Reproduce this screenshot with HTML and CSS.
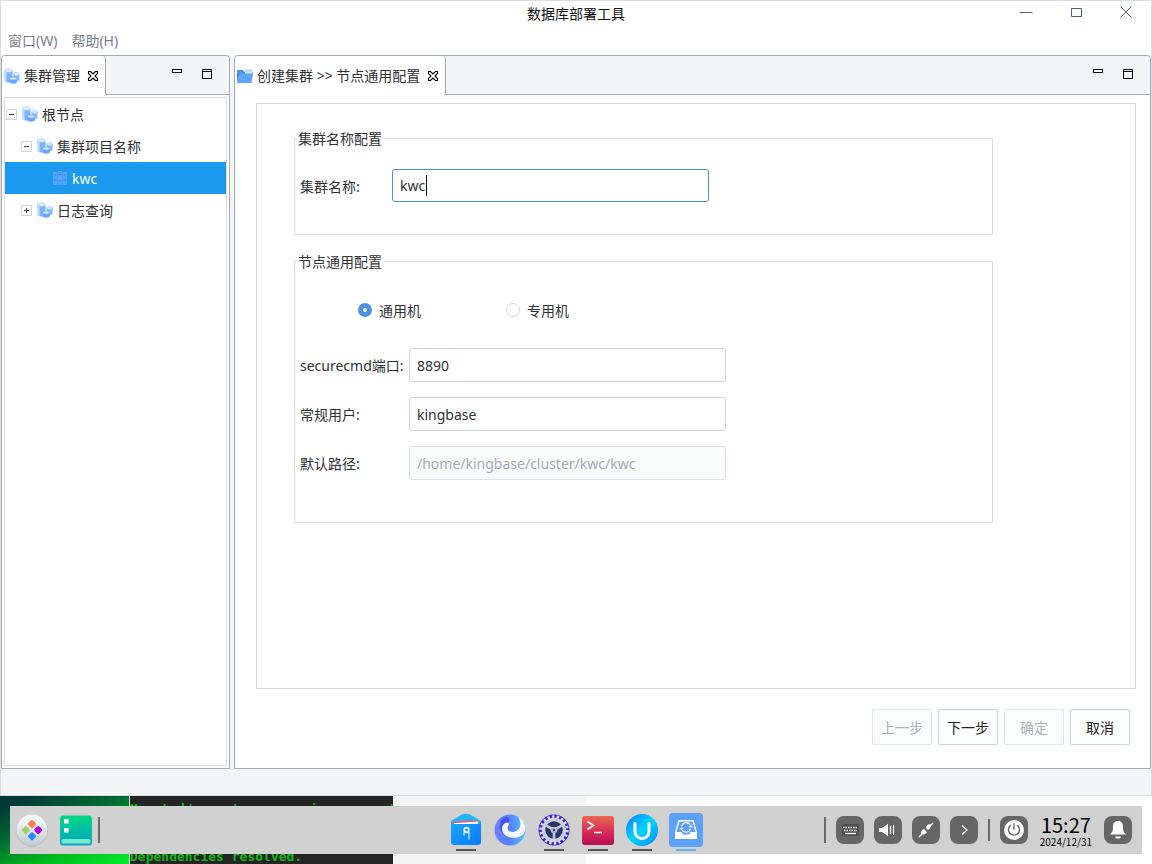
FILE: index.html
```html
<!DOCTYPE html>
<html lang="zh-CN">
<head>
  <meta charset="UTF-8">
  <meta name="viewport" content="width=device-width, initial-scale=1.0">
  <title>数据库部署工具</title>
  <link rel="stylesheet" href="styles.css">
</head>
<body>
  <!-- Shared icons -->
  <svg class="sprite" aria-hidden="true">
    <symbol id="icon-db" viewBox="0 0 16 16">
      <path d="M.5 2.500v10c0 1.200 1.500 2 4 2s4-.8 4-2v-10z" fill="#7db3fb"/>
      <path d="M.5 2.500v10c0 .8.700 1.400 2 1.700V3.500z" fill="#c4deff"/>
      <ellipse cx="4.500" cy="2.500" rx="4" ry="1.800" fill="#e2efff" stroke="#9cc6ff" stroke-width=".6"/>
      <path d="M9.500 6v5.500c0 1 1.200 1.500 3 1.500s3-.5 3-1.500V6z" fill="#8dbdfd"/>
      <ellipse cx="12.500" cy="6" rx="3" ry="1.400" fill="#e2efff" stroke="#86b8fb" stroke-width=".6"/>
      <path d="M5.500 10.500V14c0 1 1.500 1.700 3.700 1.700s3.800-.7 3.800-1.700v-3.500z" fill="#68a7fd"/>
      <ellipse cx="9.200" cy="10.500" rx="3.700" ry="1.700" fill="#d4e7ff" stroke="#5b9df8" stroke-width=".7"/>
    </symbol>
    <symbol id="icon-close" viewBox="0 0 12 12">
      <path d="M1.500 1.500h2L6 4l2.500-2.500h2v2L8 6l2.500 2.500v2h-2L6 8l-2.500 2.500h-2v-2L4 6 1.500 3.500z" fill="#fff" stroke="#000" stroke-width="1.100"/>
    </symbol>
    <symbol id="icon-min" viewBox="0 0 10 12">
      <rect x=".5" y=".5" width="9" height="3" fill="#fff" stroke="#000"/>
    </symbol>
    <symbol id="icon-max" viewBox="0 0 10 12">
      <path d="M.5.5h9v9h-9zM0 2.500h10" fill="none" stroke="#000"/>
    </symbol>
  </svg>

  <div class="window">
    <header class="titlebar">
      <h1>数据库部署工具</h1>
      <div class="window-buttons">
        <button type="button" aria-label="最小化"><svg viewBox="0 0 14 14"><path d="M.5 7.500h13" /></svg></button>
        <button type="button" aria-label="最大化"><svg viewBox="0 0 14 14"><path d="M2.500 3.500h10v8h-10z" /></svg></button>
        <button type="button" aria-label="关闭"><svg viewBox="0 0 14 14"><path d="M1.500 1.500l11 11M12.500 1.500l-11 11" /></svg></button>
      </div>
    </header>

    <nav class="menubar">
      <a href="#window">窗口(W)</a>
      <a href="#help">帮助(H)</a>
    </nav>

    <main class="workspace">
      <section class="panel side-panel">
        <div class="panel-head">
          <div class="tab">
            <svg class="icon"><use href="#icon-db"/></svg>
            <h2>集群管理</h2>
            <button type="button" aria-label="关闭"><svg class="close-icon"><use href="#icon-close"/></svg></button>
          </div>
          <div class="panel-tools">
            <button type="button" aria-label="最小化"><svg><use href="#icon-min"/></svg></button>
            <button type="button" aria-label="最大化"><svg><use href="#icon-max"/></svg></button>
          </div>
        </div>
        <ul class="tree">
          <li class="node"><button type="button" class="toggle" aria-label="折叠"><svg viewBox="0 0 11 11"><path d="M3 5.500h5"/></svg></button><svg class="icon"><use href="#icon-db"/></svg><span>根节点</span></li>
          <li class="node level-1"><button type="button" class="toggle" aria-label="折叠"><svg viewBox="0 0 11 11"><path d="M3 5.500h5"/></svg></button><svg class="icon"><use href="#icon-db"/></svg><span>集群项目名称</span></li>
          <li class="node level-2 selected"><svg class="icon" viewBox="0 0 16 16">
            <path d="M1 2h4v13H1zM11 2h4v13h-4zM5.500 1h5v14h-5z" fill="#5aa2ff"/>
            <path d="M1.500 5h3M11.500 5h3M6 4.500h4M8 2v2.500M1.500 10h3M11.500 10h3M7 11h2" stroke="#3486e8" stroke-width=".9"/></svg><span>kwc</span></li>
          <li class="node level-1"><button type="button" class="toggle" aria-label="展开"><svg viewBox="0 0 11 11"><path d="M3 5.500h5M5.500 3v5"/></svg></button><svg class="icon"><use href="#icon-db"/></svg><span>日志查询</span></li>
        </ul>
      </section>

      <section class="panel main-panel">
        <div class="panel-head">
          <div class="tab">
            <svg class="icon" viewBox="0 0 16 16">
              <path d="M0 2h6l1.500 2H16v4H0z" fill="#4a92f5"/>
              <path d="M8 1h7.500v5H8z" fill="#dcecff"/>
              <path d="M8 3h7.500" stroke="#9cc7ff"/>
              <path d="M2.500 5.500H16L14.500 15H0z" fill="#5fa6ff"/>
              <path d="M0 6v9L2.500 5.500z" fill="#3f86ea"/>
            </svg>
            <h2>创建集群 &gt;&gt; 节点通用配置</h2>
            <button type="button" aria-label="关闭"><svg class="close-icon"><use href="#icon-close"/></svg></button>
          </div>
          <div class="panel-tools">
            <button type="button" aria-label="最小化"><svg><use href="#icon-min"/></svg></button>
            <button type="button" aria-label="最大化"><svg><use href="#icon-max"/></svg></button>
          </div>
        </div>

        <form class="wizard">
          <div class="wizard-page">
            <fieldset class="group-name">
              <legend>集群名称配置</legend>
              <div class="field">
                <label for="clusterName">集群名称:</label>
                <div class="active-input">
                  <input type="text" id="clusterName" value="kwc">
                  <span class="caret"></span>
                </div>
              </div>
            </fieldset>

            <fieldset class="group-node">
              <legend>节点通用配置</legend>
              <div class="radios">
                <label><input type="radio" name="machine" checked><span>通用机</span></label>
                <label><input type="radio" name="machine"><span>专用机</span></label>
              </div>
              <div class="field">
                <label for="port">securecmd端口:</label>
                <input type="text" id="port" value="8890">
              </div>
              <div class="field">
                <label for="user">常规用户:</label>
                <input type="text" id="user" value="kingbase">
              </div>
              <div class="field">
                <label for="path">默认路径:</label>
                <input type="text" id="path" value="/home/kingbase/cluster/kwc/kwc" disabled>
              </div>
            </fieldset>
          </div>
          <div class="actions">
            <button type="button" disabled>上一步</button>
            <button type="button">下一步</button>
            <button type="button" disabled>确定</button>
            <button type="button">取消</button>
          </div>
        </form>
      </section>
    </main>
    <footer class="statusbar"></footer>
  </div>

  <!-- Desktop under the window -->
  <div class="desktop">
    <div class="wallpaper"></div>
    <div class="terminal">
      <span>Mounted/some tmp space in case set</span>
      <span>Dependencies resolved.</span>
    </div>
    <div class="paper"></div>

    <div class="taskbar">
      <div class="launchers">
        <button type="button" aria-label="开始"><svg viewBox="0 0 34 34">
          <defs><linearGradient id="g-start" x2="0" y2="1"><stop stop-color="#fff"/><stop offset="1" stop-color="#bfcccc"/></linearGradient></defs>
          <circle cx="17" cy="17.500" r="16" fill="#bbb"/>
          <circle cx="17" cy="17" r="15.500" fill="url(#g-start)"/>
          <g stroke-width="3" stroke-linejoin="round">
            <path d="M17 8.500l2.500 2.500-2.500 2.500-2.500-2.500z" fill="#ff7a50" stroke="#ff7a50"/>
            <path d="M10.800 14.500l2.500 2.500-2.500 2.500L8.300 17z" fill="#9ad06a" stroke="#9ad06a"/>
            <path d="M23.200 14.500l2.500 2.500-2.500 2.500-2.500-2.500z" fill="#b400dc" stroke="#b400dc"/>
            <path d="M17 20.800l2.500 2.500-2.500 2.500-2.500-2.500z" fill="#2589ff" stroke="#2589ff"/>
          </g></svg></button>
        <button type="button" aria-label="显示桌面"><svg viewBox="0 0 34 34">
          <defs><linearGradient id="g-desk" x2="0" y2="1"><stop stop-color="#00d681"/><stop offset="1" stop-color="#00a6c8"/></linearGradient></defs>
          <rect x="1" y="2.500" width="32" height="30" rx="3" fill="url(#g-desk)"/>
          <path d="M5 6h4.500v4.500H5zM5 15h4.500v4.500H5z" fill="#fff"/>
          <rect x="2.500" y="26" width="29" height="4.500" rx="1.500" fill="#7be8cb"/></svg></button>
        <span class="separator"></span>
      </div>

      <div class="apps">
        <button type="button" class="running" aria-label="文件管理"><svg viewBox="0 0 34 34">
          <defs><linearGradient id="g-file" x2="1" y2="1"><stop stop-color="#18a8ff"/><stop offset="1" stop-color="#0878ff"/></linearGradient></defs>
          <path d="M2 8L13 1.500q4-1.500 8 0L32 8v20H2z" fill="#21b5f5"/>
          <path d="M4 8.500L28 7v5H4z" fill="#f05a78"/><path d="M5 10.300L29 8.500V14H5z" fill="#fff"/>
          <path d="M2 9.500q1 1.500 3 1.500h24q2 0 3-1.500V29a3 3 0 0 1-3 3H5a3 3 0 0 1-3-3z" fill="url(#g-file)"/>
          <circle cx="17.500" cy="17" r="2.300" fill="none" stroke="#fff" stroke-width="1.700"/>
          <path d="M15 18.500v4M20 19v7.500" stroke="#dff1ff" stroke-width="1.200"/></svg></button>
        <button type="button" aria-label="浏览器"><svg viewBox="0 0 34 34">
          <defs><linearGradient id="g-web" x2="1"><stop stop-color="#6e82ff"/><stop offset=".45" stop-color="#557cff"/><stop offset="1" stop-color="#55c5ff"/></linearGradient></defs>
          <circle cx="17" cy="17" r="15.500" fill="url(#g-web)"/>
          <path d="M8 8c2-4 7-5 8-2 .8 2-2 4.500-2.500 7.500-.5 3 1 5.500 3 6-5 2-9 0-9.500-4.500C6.800 12 7 10 8 8z" fill="#4a50f4"/>
          <path d="M25 3.500c5 3 7.500 8 7.300 13C31 26 17 27 11.500 21.500 8 18 8.500 13 11 11c2-2 5-1.500 5 .3 0 1.200-1.500 1.700-1.500 3.700 0 3 3.500 5 7.500 3.500 6-2 7-8.500 3-15z" fill="#f4f7ff"/></svg></button>
        <button type="button" class="running" aria-label="设置"><svg viewBox="0 0 34 34">
          <circle cx="17" cy="17" r="15.500" fill="#4020cf"/>
          <circle cx="17" cy="17" r="13.200" fill="none" stroke="#dfe1f2" stroke-width="3" stroke-dasharray="2.300 2.308"/>
          <circle cx="17" cy="17" r="10.500" fill="#2d3468" stroke="#cdd1e6" stroke-width="3.500"/>
          <path d="M17 17v9M17 17l-8-4.600M17 17l8-4.600" stroke="#c4c8dd" stroke-width="2.600"/>
          <circle cx="17" cy="17" r="3.300" fill="#b9bed7"/><circle cx="17" cy="17" r="1.300" fill="#3e4480"/></svg></button>
        <button type="button" class="running" aria-label="终端"><svg viewBox="0 0 34 34">
          <defs><linearGradient id="g-term" x2="0" y2="1"><stop stop-color="#ea6850"/><stop offset=".5" stop-color="#da3158"/><stop offset="1" stop-color="#b80b57"/></linearGradient></defs>
          <rect x="1" y="3" width="32" height="29" rx="3" fill="url(#g-term)"/>
          <path d="M6.500 8.500l6 4-6 4M13 19.500h8" fill="none" stroke="#fff" stroke-width="1.600"/></svg></button>
        <button type="button" class="running" aria-label="助手"><svg viewBox="0 0 34 34">
          <defs><linearGradient id="g-u" x2="1" y2="1"><stop stop-color="#0878f5"/><stop offset=".5" stop-color="#00d4ff"/><stop offset="1" stop-color="#0086f5"/></linearGradient></defs>
          <circle cx="17" cy="17" r="16" fill="url(#g-u)"/>
          <path d="M10 10.500v8a7 7 0 0 0 14 0v-8" fill="none" stroke="#fff" stroke-width="3" stroke-linecap="round"/></svg></button>
        <button type="button" class="running current" aria-label="数据库部署工具"><svg viewBox="0 0 34 34">
          <rect width="34" height="34" rx="4" fill="#5ba1fb"/>
          <path d="M6.700 19L10 7.700h14L27.300 19v6.300H6.700z" fill="none" stroke="#fff" stroke-width="1.400" stroke-linejoin="round"/>
          <path d="M6 19h6.500c.5 2 1.500 2.500 2.500 2.500h4c1 0 2-.5 2.500-2.500H28v7H6z" fill="#fff"/>
          <path d="M12.700 13.500a4.500 4.500 0 0 1 8.300-1.700M21.500 15.500a4.500 4.500 0 0 1-8.300 1.500" fill="none" stroke="#fff" stroke-width="1.100"/>
          <path d="M20 14.200h4l-2-2.500zM10.500 15h4l-2 2.500z" fill="#fff"/></svg></button>
      </div>

      <div class="tray">
        <span class="separator"></span>
        <button type="button" aria-label="键盘"><svg viewBox="0 0 28 28">
          <rect x="6" y="8" width="17" height="12" rx="1" fill="#505050"/>
          <path d="M7 11.500h15M8 14.500h13" stroke="#fff" stroke-width="1.500" stroke-dasharray="1.500 1"/><path d="M9 17.500h11" stroke="#fff" stroke-width="1.300"/></svg></button>
        <button type="button" aria-label="音量"><svg viewBox="0 0 28 28">
          <path d="M5 12h3l6-4v12l-6-4H5z" fill="#fff"/><path d="M16.500 10v8M19.500 9v10" stroke="#fff" stroke-width="1.200"/></svg></button>
        <button type="button" aria-label="网络"><svg viewBox="0 0 28 28">
          <path d="M7 21l5-5M16 12l5-5" stroke="#fff" stroke-width="1.500"/>
          <path d="M9 18c0-3 1-4 3-5l3 3c-1 2-3 3-6 2zM14 12c0-2 2-4 5-4 0 3-1 5-3 6z" fill="#fff"/></svg></button>
        <button type="button" aria-label="更多"><svg viewBox="0 0 28 28">
          <path d="M12 9.500l5 4.500-5 4.500" fill="none" stroke="#fff" stroke-width="1.300"/></svg></button>
        <span class="separator short"></span>
        <button type="button" aria-label="电源"><svg viewBox="0 0 28 28">
          <circle cx="14" cy="14" r="10" fill="#fff"/>
          <path d="M11 9a5.500 5.500 0 1 0 6 0M14 7.500v6" fill="none" stroke="#666" stroke-width="1.400"/></svg></button>
        <div class="clock">
          <time class="time">15:27</time>
          <time class="date">2024/12/31</time>
        </div>
        <button type="button" aria-label="通知"><svg viewBox="0 0 28 28">
          <path d="M14 5c-3.500 0-5 2.500-5 6 0 4-.5 5-3 7.500h16c-2.500-2.500-3-3.500-3-7.500 0-3.500-1.500-6-5-6z" fill="#fff"/>
          <path d="M11 20.500h6c-.5 1.500-1.500 2.200-3 2.200s-2.500-.7-3-2.200z" fill="#fff"/></svg></button>
      </div>
    </div>
  </div>
</body>
</html>
```

FILE: styles.css
```css
* { margin: 0; padding: 0; box-sizing: border-box; }
body {
  height: 100vh;
  display: flex;
  flex-direction: column;
  font-family: 'Noto Sans', 'Noto Sans CJK SC', sans-serif;
  font-size: 14px;
  line-height: 20px;
  color: #303133;
  background: #fff;
}
button, input { font: inherit; color: inherit; }
button { background: none; border: none; }
svg { display: block; }
a { color: inherit; text-decoration: none; }
.sprite { position: absolute; width: 0; height: 0; }
.icon { width: 16px; height: 16px; flex: none; }

/* Window */
.window {
  flex: 1;
  display: flex;
  flex-direction: column;
  border: 1px solid #dcdddf;
}
.titlebar {
  display: grid;
  grid-template-columns: 1fr auto 1fr;
  height: 26px;
  padding-top: 3px;
}
.titlebar h1 {
  grid-column: 2;
  font-size: 14px;
  font-weight: 400;
  color: #111;
}
.window-buttons {
  display: flex;
  justify-content: flex-end;
  gap: 36px;
  padding-right: 18px;
}
.window-buttons button { width: 14px; height: 16px; }
.window-buttons svg {
  width: 14px;
  height: 14px;
  fill: none;
  stroke: #50607c;
}
.menubar {
  display: flex;
  gap: 14px;
  height: 28px;
  padding: 4px 7px;
  color: #7a7f8e;
}
.workspace {
  flex: 1;
  display: flex;
  gap: 4px;
  background: #f4f5f7;
}
.statusbar { height: 26px; background: #f4f5f7; }

/* Panels */
.panel {
  display: flex;
  flex-direction: column;
  background: #fff;
  border: 1px solid #a5abb5;
  border-radius: 4px 4px 0 0;
}
.side-panel { width: 229px; }
.main-panel { flex: 1; }
.panel-head {
  display: flex;
  justify-content: space-between;
  height: 39px;
  background: #f4f5f7;
  border-bottom: 1px solid #a5abb5;
  border-radius: 4px 4px 0 0;
}
.tab {
  display: flex;
  align-items: center;
  gap: 4px;
  height: 39px;
  padding: 0 6px 0 2px;
  background: #fff;
  border-right: 1px solid #a5abb5;
  border-radius: 4px 4px 0 0;
}
.tab h2 { font-size: 14px; font-weight: 400; }
.tab button { margin-left: 3px; }
.close-icon { width: 12px; height: 12px; }
.panel-tools {
  display: flex;
  align-items: flex-start;
  gap: 20px;
  padding: 13px 17px 0 0;
}
.panel-tools svg { width: 10px; height: 12px; }

/* Tree */
.tree {
  flex: 1;
  margin: 2px;
  border: 1px solid #dcdddf;
  list-style: none;
}
.node {
  display: flex;
  align-items: center;
  gap: 4px;
  height: 32px;
  padding-left: 1px;
}
.level-1 { padding-left: 16px; }
.level-2 { padding-left: 47px; }
.selected { background: #1b99ee; color: #fff; }
.toggle {
  width: 11px;
  height: 11px;
  margin-right: 1px;
  border: 1px solid #d0d2dc;
  border-radius: 1px;
}
.toggle svg {
  width: 11px;
  height: 11px;
  margin: -1px;
  stroke: #444;
}

/* Wizard */
.wizard {
  flex: 1;
  display: flex;
  flex-direction: column;
  padding: 8px 14px 23px 21px;
}
.wizard-page {
  flex: 1;
  padding: 23px 142px 0 37px;
  border: 1px solid #dcdddf;
}
fieldset { border: 1px solid #dcdddf; }
legend { margin-left: -4px; padding: 0 2px; }
.node span, .radios span, .field label, legend { padding-top: 2px; }
.group-name { padding: 20px 5px 32px; margin-bottom: 15px; }
.group-node { padding: 27px 5px 42px; }
.field {
  display: grid;
  grid-template-columns: 109px 317px;
  align-items: center;
}
.field + .field { margin-top: 15px; }
.group-name .field { grid-template-columns: 92px 317px; }
input[type="text"] {
  width: 100%;
  height: 34px;
  padding: 0 7px;
  background: #fff;
  border: 1px solid #cfd5e3;
  border-radius: 3px;
  outline: none;
}
input[type="text"]:disabled {
  color: #a9abb0;
  background: #fafcfb;
  border-color: #dfe2ea;
}
.active-input { position: relative; }
.active-input input[type="text"] { height: 33px; border-color: #4a90d9; }
.caret {
  position: absolute;
  left: 34px;
  top: 6px;
  width: 1px;
  height: 21px;
  background: #111;
}
.radios {
  display: flex;
  height: 22px;
  margin-bottom: 27px;
  padding-left: 58px;
}
.radios label {
  display: flex;
  align-items: center;
  gap: 7px;
  width: 148px;
}
.radios input {
  appearance: none;
  width: 14px;
  height: 14px;
  background: #fff;
  border: 1px solid #d0d5e6;
  border-radius: 50%;
}
.radios input:checked { border: 5px solid #4f92e3; }
.actions {
  display: flex;
  justify-content: flex-end;
  gap: 6px;
  margin-top: 20px;
  padding-right: 6px;
}
.actions button {
  width: 60px;
  height: 36px;
  padding-top: 2px;
  background: #fdfefe;
  border: 1px solid #cbd3e1;
  border-radius: 2px;
  color: #222;
}
.actions button:disabled {
  color: #b0b2b6;
  background: #fbfdfc;
  border-color: #e2e5ee;
}

/* Desktop and taskbar */
.desktop {
  position: relative;
  display: flex;
  height: 68px;
  overflow: hidden;
}
.wallpaper {
  width: 130px;
  background: linear-gradient(160deg, #003a35 10%, #006a35 40%, #00b81c 70%, #00f030);
  border-right: 1px solid #dcdddf;
}
.terminal {
  display: flex;
  flex-direction: column;
  justify-content: space-between;
  width: 263px;
  padding-top: 6px;
  overflow: hidden;
  background: #242424;
  color: #12b812;
  font-family: 'DejaVu Sans Mono', monospace;
  font-size: 13px;
  font-weight: bold;
  line-height: 14px;
  white-space: nowrap;
}
.paper { width: 193px; background: #f4f4f4; }
.taskbar {
  position: absolute;
  top: 10px;
  left: 10px;
  right: 10px;
  height: 48px;
  display: grid;
  grid-template-columns: 1fr auto 1fr;
  align-items: center;
  padding: 0 10px;
  background: #d1d1d1;
}
.launchers, .apps, .tray { display: flex; align-items: center; }
.launchers { gap: 10px; margin-left: -5px; }
.launchers svg, .apps svg { width: 34px; height: 34px; }
.separator {
  width: 2px;
  height: 26px;
  background: #6b6b6b;
}
.separator.short { height: 22px; }
.launchers .separator { margin-left: -5px; }
.apps { gap: 10px; }
.apps button {
  height: 48px;
  padding-bottom: 1px;
  border-bottom: 3px solid transparent;
}
.apps .running {
  background: linear-gradient(#555, #555) center bottom / 20px 2px no-repeat;
}
.apps .current { background-image: linear-gradient(#5eb2ef, #5eb2ef); }
.apps button svg { margin-top: 4px; }
.tray { justify-content: flex-end; gap: 10px; }
.tray button {
  width: 28px;
  height: 28px;
  background: #666;
  border-radius: 8px;
}
.tray svg { width: 28px; height: 28px; }
.clock {
  display: flex;
  flex-direction: column;
  align-items: center;
  margin: 0 2px;
  padding-top: 4px;
  font-family: 'Noto Sans CJK SC', sans-serif;
  color: #000;
}
.time { font-size: 20px; line-height: 20px; }
.date { font-size: 10px; line-height: 14px; }
```
